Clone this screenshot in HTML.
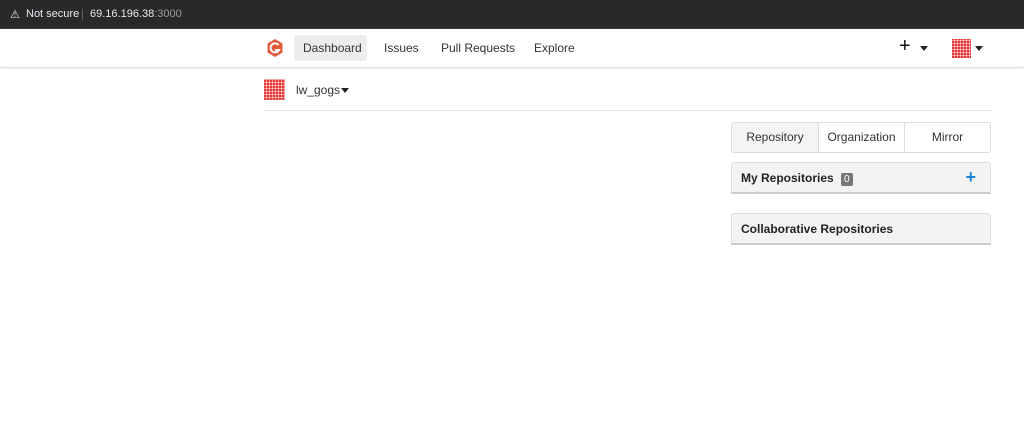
<!DOCTYPE html>
<html><head><style>
*{box-sizing:border-box;margin:0;padding:0}
body{width:1024px;height:440px;background:#fff;font-family:"Liberation Sans",sans-serif;font-size:12px;color:#333;position:relative;overflow:hidden}
.bar{position:absolute;left:0;top:0;width:1024px;height:29px;background:#28292a;border-bottom:1px solid #3a3a3a}
.bar span{position:absolute;top:8px;color:#e8eaed;font-size:11px}
.nav{position:absolute;top:29px;left:0;width:1024px;height:39px;border-bottom:1px solid #ddd;box-shadow:0 1px 2px rgba(0,0,0,.08)}
.a{position:absolute;font-size:12px;color:#333}
.av{position:absolute;background:repeating-linear-gradient(90deg,#d22 0 2px,#f88 2px 3px),#d22;opacity:.9}
.av::after{content:"";position:absolute;inset:0;background:repeating-linear-gradient(0deg,transparent 0 2px,rgba(255,255,255,.5) 2px 3px)}
.caret{position:absolute;width:0;height:0;border-left:4px solid transparent;border-right:4px solid transparent;border-top:5px solid #222}
.tabs{position:absolute;left:731px;top:122px;width:260px;height:31px;border:1px solid #ddd;border-radius:3px;display:flex}
.tabs div{flex:1;text-align:center;line-height:29px;border-left:1px solid #ddd}
.tabs div:first-child{border-left:none;background:#f4f4f4;flex:0 0 86px}
.box{position:absolute;left:731px;width:260px;height:32px;background:#f3f3f3;border:1px solid #ddd;border-bottom:2px solid #ccc;border-radius:3px 3px 0 0;font-weight:bold;font-size:12px;padding:8px 9px;color:#222}
</style></head><body>
<div class="bar"><span style="left:10px">⚠</span><span style="left:26px">Not secure</span><span style="left:81px;color:#666">|</span><span style="left:90px">69.16.196.38<span style="position:static;color:#999">:3000</span></span></div>
<div class="nav">
<svg style="position:absolute;left:265px;top:9px" width="20" height="20" viewBox="0 0 20 20"><path d="M10 1l7.5 4.5v9L10 19l-7.5-4.5v-9z" fill="#e05a3a"/><path d="M13.5 7A4.5 4.5 0 1 0 14 12h-4" fill="none" stroke="#fff" stroke-width="2"/></svg>
<div style="position:absolute;left:294px;top:6px;width:73px;height:26px;background:#ededed;border-radius:3px"></div>
<span class="a" style="left:303px;top:12px">Dashboard</span>
<span class="a" style="left:384px;top:12px">Issues</span>
<span class="a" style="left:441px;top:12px">Pull Requests</span>
<span class="a" style="left:534px;top:12px">Explore</span>
<span class="a" style="left:899px;top:6px;font-size:20px;color:#111">+</span>
<div class="caret" style="left:920px;top:17px"></div>
<div class="av" style="left:952px;top:10px;width:19px;height:19px"></div>
<div class="caret" style="left:975px;top:17px"></div>
</div>
<div class="av" style="left:264px;top:79px;width:21px;height:21px"></div>
<span class="a" style="left:296px;top:83px">lw_gogs</span>
<div class="caret" style="left:341px;top:88px"></div>
<div style="position:absolute;left:264px;top:110px;width:727px;height:1px;background:#e5e5e5"></div>
<div class="tabs"><div>Repository</div><div>Organization</div><div>Mirror</div></div>
<div class="box" style="top:162px">My Repositories <span style="display:inline-block;background:#777;color:#fff;font-weight:normal;font-size:10px;padding:1px 3px;border-radius:2px;margin-left:4px">0</span><span style="position:absolute;right:14px;top:4px;color:#2185d0;font-size:18px;font-weight:bold">+</span></div>
<div class="box" style="top:213px">Collaborative Repositories</div>
</body></html>
